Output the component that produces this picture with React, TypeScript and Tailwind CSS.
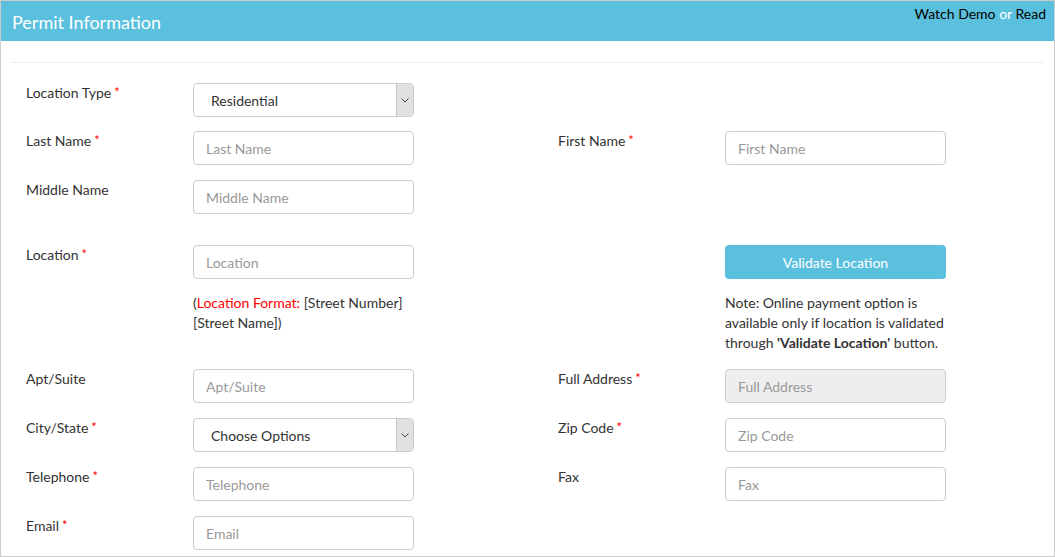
import React from "react";

const font = { fontFamily: "Lato, 'Open Sans', sans-serif" };

function Req() {
  return <span className="text-[#ff0000] text-[13px] ml-[3px] align-top leading-[18px]">*</span>;
}

function Label({ text, req }: { text: string; req?: boolean }) {
  return (
    <div className="w-[167px] shrink-0 text-[14px] leading-[20px] text-[#333]">
      {text}
      {req && <Req />}
    </div>
  );
}

function Input({ ph, disabled }: { ph: string; disabled?: boolean }) {
  return (
    <input
      placeholder={ph}
      disabled={disabled}
      className={
        "w-[221px] h-[34px] shrink-0 rounded-[4px] border border-[#ccc] px-[12px] text-[14px] text-[#555] placeholder:text-[#999] outline-none " +
        (disabled ? "bg-[#eee]" : "bg-white")
      }
      style={font}
    />
  );
}

function Select({ value }: { value: string }) {
  return (
    <div className="relative w-[221px] h-[34px] shrink-0 rounded-[4px] border border-[#ccc] bg-white text-[14px] text-[#333] flex items-center pl-[17px]">
      {value}
      <div className="absolute right-0 top-0 h-[32px] w-[17px] bg-[#e1e1e1] border-l border-[#c4c4c4] rounded-r-[3px] flex items-center justify-center">
        <svg width="8" height="5" viewBox="0 0 8 5">
          <path d="M0.5 0.5 L4 4 L7.5 0.5" fill="none" stroke="#444" strokeWidth="1" />
        </svg>
      </div>
    </div>
  );
}

function Spacer() {
  return <div className="w-[144px] shrink-0" />;
}

export default function App() {
  return (
    <div
      className="w-[1055px] h-[557px] overflow-hidden border border-[#ccc] bg-white box-border"
      style={font}
    >
      <div className="h-[40px] bg-[#5bc0de] flex items-start justify-between">
        <div className="text-white text-[18px] leading-[20px] pl-[11px] pt-[11px]">Permit Information</div>
        <div className="text-[14px] leading-[20px] pt-[3px] pr-[8px] text-black">
          Watch Demo <span className="text-white">or</span> Read
        </div>
      </div>
      <div className="px-[10px]">
        <div className="mt-[21px] border-t border-[#eee]" />
        <div className="pl-[15px]">
          <div className="flex mt-[20px]">
            <Label text="Location Type" req />
            <Select value="Residential" />
          </div>
          <div className="flex mt-[14px]">
            <Label text="Last Name" req />
            <Input ph="Last Name" />
            <Spacer />
            <Label text="First Name" req />
            <Input ph="First Name" />
          </div>
          <div className="flex mt-[15px]">
            <Label text="Middle Name" />
            <Input ph="Middle Name" />
          </div>
          <div className="flex mt-[31px]">
            <Label text="Location" req />
            <Input ph="Location" />
            <Spacer />
            <div className="w-[167px] shrink-0" />
            <button className="w-[221px] h-[34px] rounded-[4px] bg-[#5bc0de] text-white text-[14px]" style={font}>
              Validate Location
            </button>
          </div>
          <div className="flex mt-[14px] text-[14px] leading-[20px] text-[#333]">
            <div className="w-[167px] shrink-0" />
            <p className="w-[221px] shrink-0">
              <span>(</span>
              <span className="text-[#ff0000]">Location Format:</span>
              <span> [Street Number] [Street Name])</span>
            </p>
            <Spacer />
            <div className="w-[167px] shrink-0" />
            <div className="w-[240px] shrink-0 whitespace-nowrap">
              Note: Online payment option is
              <br />
              available only if location is validated
              <br />
              through <b>'Validate Location'</b> button.
            </div>
          </div>
          <div className="flex mt-[16px]">
            <Label text="Apt/Suite" />
            <Input ph="Apt/Suite" />
            <Spacer />
            <Label text="Full Address" req />
            <Input ph="Full Address" disabled />
          </div>
          <div className="flex mt-[15px]">
            <Label text="City/State" req />
            <Select value="Choose Options" />
            <Spacer />
            <Label text="Zip Code" req />
            <Input ph="Zip Code" />
          </div>
          <div className="flex mt-[15px]">
            <Label text="Telephone" req />
            <Input ph="Telephone" />
            <Spacer />
            <Label text="Fax" />
            <Input ph="Fax" />
          </div>
          <div className="flex mt-[15px]">
            <Label text="Email" req />
            <Input ph="Email" />
          </div>
        </div>
      </div>
    </div>
  );
}
